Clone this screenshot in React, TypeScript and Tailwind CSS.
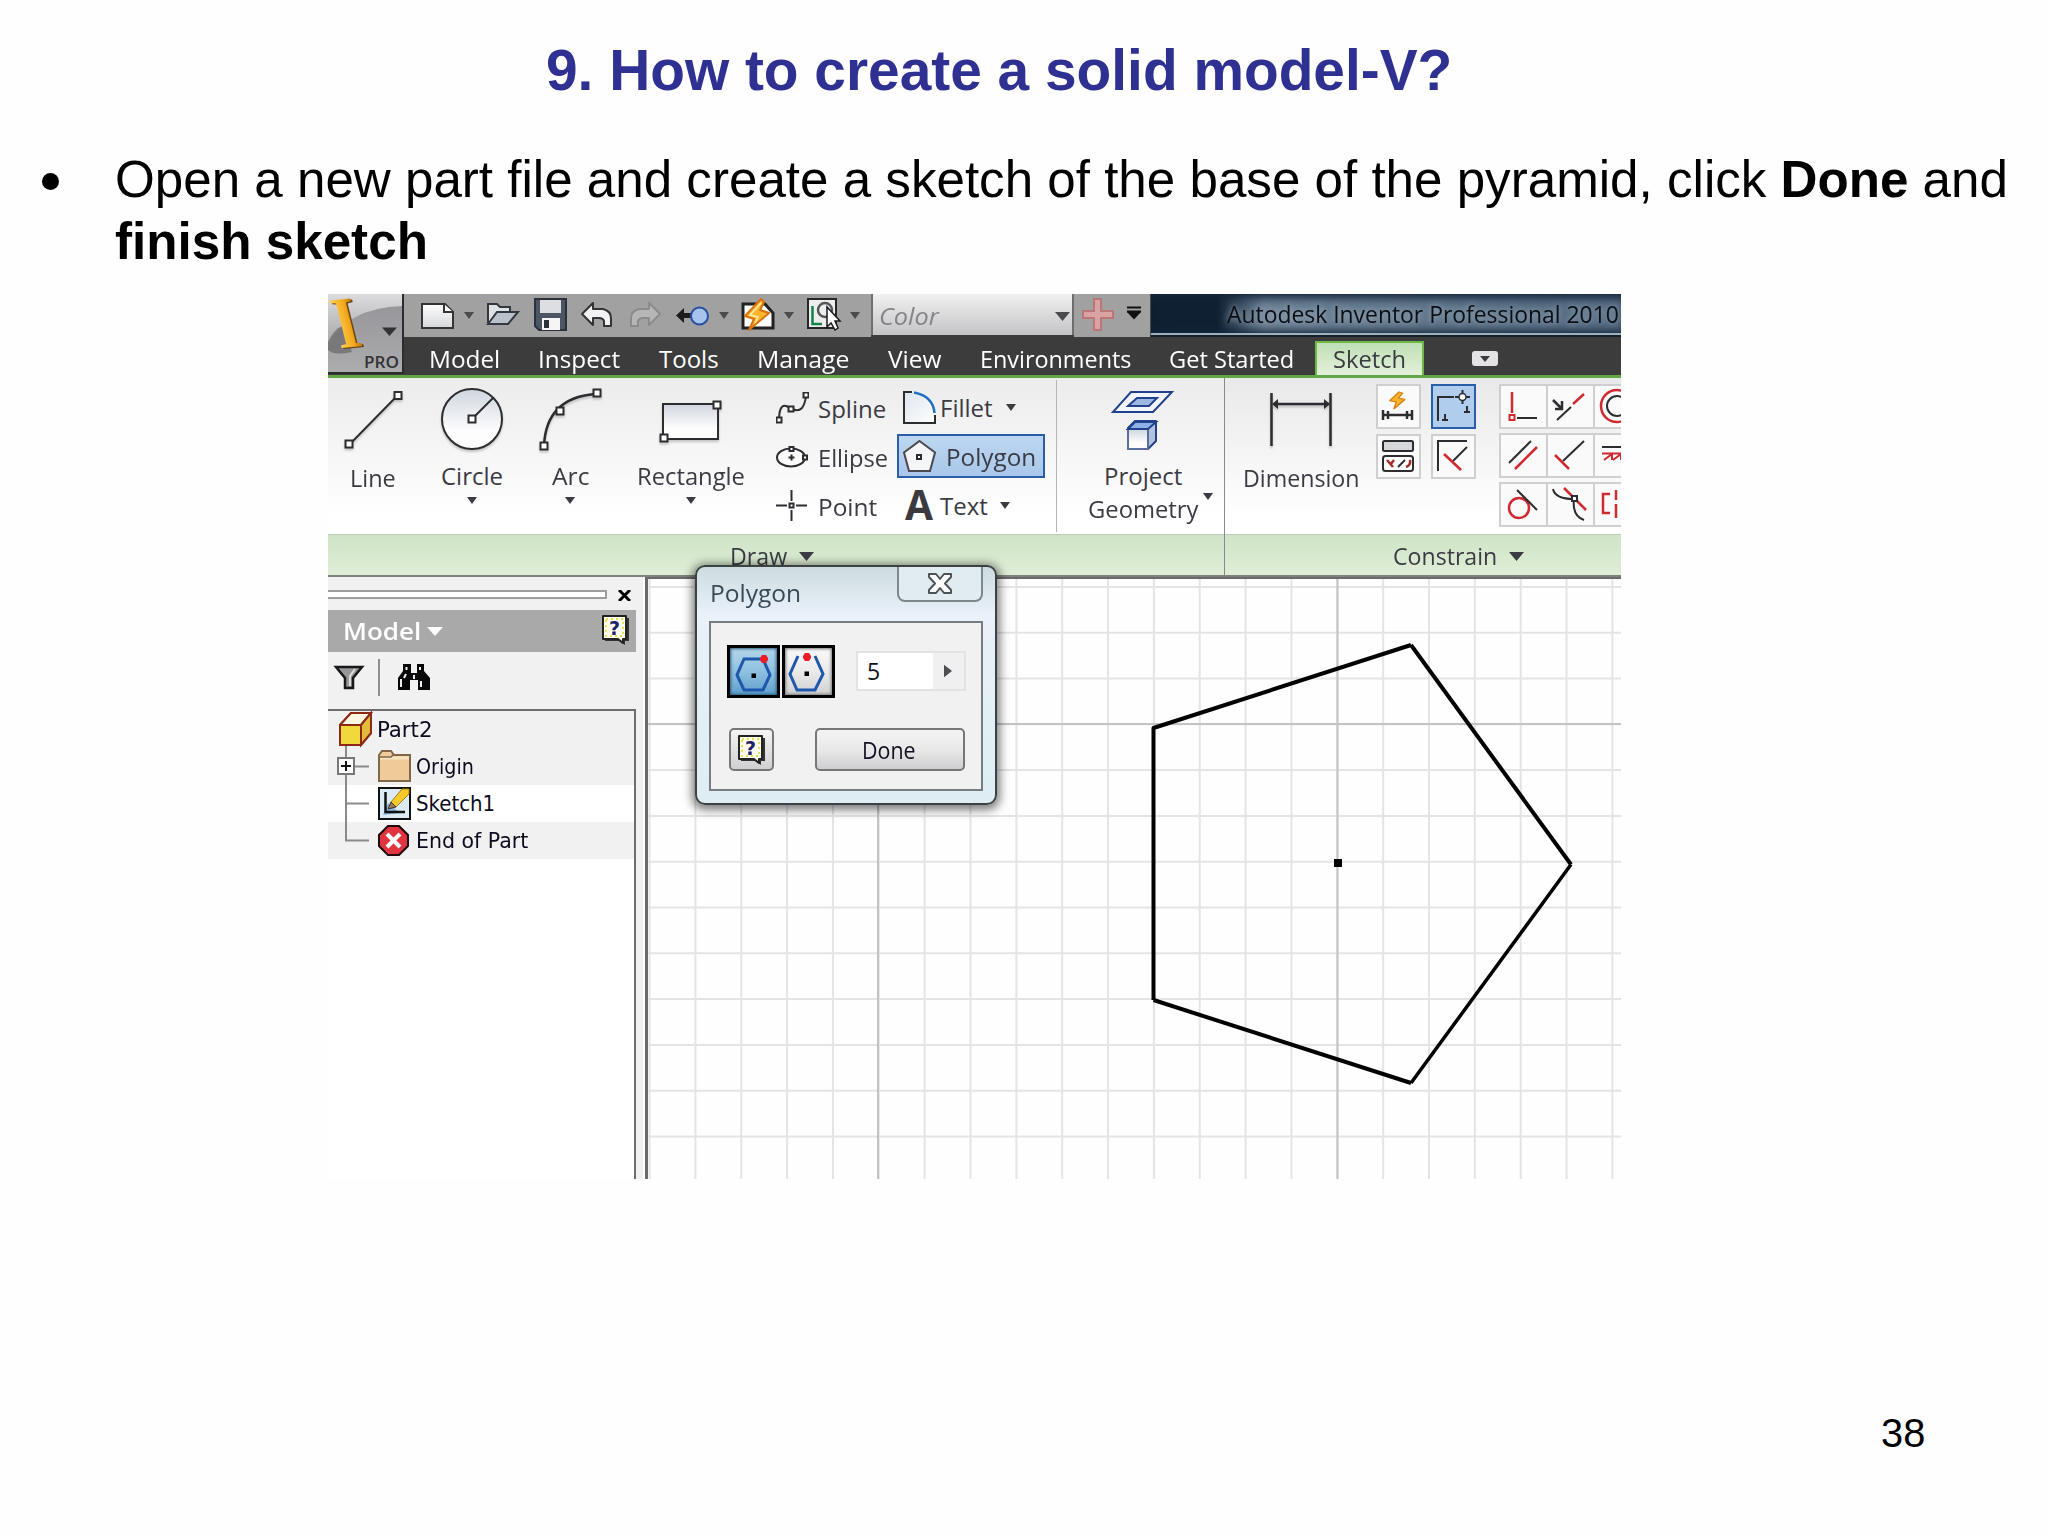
import React, { useLayoutEffect, useRef, useState } from 'react';

const UI = "font-['Open_Sans','Noto_Sans',sans-serif]";
const TAHOMA = "font-['DejaVu_Sans_Condensed','DejaVu_Sans',sans-serif]";

// One-line label squeezed or stretched to a given width
function Fit({ w, className = '', children }: { w: number; className?: string; children: React.ReactNode }) {
  const ref = useRef<HTMLSpanElement>(null);
  const [scale, setScale] = useState(1);
  useLayoutEffect(() => {
    if (ref.current) setScale(w / ref.current.offsetWidth);
  }, [w]);
  return (
    <span className={`block shrink-0 ${className}`} style={{ width: w }}>
      <span ref={ref} className="inline-block origin-left whitespace-nowrap align-top" style={{ transform: `scaleX(${scale})` }}>{children}</span>
    </span>
  );
}

function Arrow({ className = '', w = 10, h = 7 }: { className?: string; w?: number; h?: number }) {
  return (
    <svg className={`shrink-0 ${className}`} width={w} height={h} viewBox="0 0 10 7" preserveAspectRatio="none">
      <path d="M0 0H10L5 7Z" fill="currentColor" />
    </svg>
  );
}

// Small square handle used by the sketch tools
function Node({ x, y, s = 7 }: { x: number; y: number; s?: number }) {
  return <rect x={x - s / 2} y={y - s / 2} width={s} height={s} fill="#fff" stroke="#2d2d31" strokeWidth="2" />;
}

function Bolt({ t, s = 1 }: { t: string; s?: number }) {
  return <path transform={t} d="M14 0L1 14L10 16L7 27L22 12L13 10L19 2Z" fill="#ffb52e" stroke="#d9820f" strokeWidth={1.6 / s} strokeLinejoin="round" />;
}

function HelpNote() {
  return (
    <svg width="29" height="31" viewBox="0 0 29 31" className="shrink-0">
      <path d="M4 4H28V27H24V31L18 27H4Z" fill="#333" />
      <path d="M2 2H25V25H22V29L17 25H2Z" fill="#fffef0" stroke="#222" strokeWidth="2" strokeLinejoin="round" />
      <rect x="5" y="5" width="17" height="17" fill="none" stroke="#e6e24a" strokeWidth="2" strokeDasharray="2 3" />
      <text x="13.5" y="20.5" textAnchor="middle" fontFamily="DejaVu Sans" fontWeight="700" fontSize="19" fill="#22206b">?</text>
    </svg>
  );
}

function QuickAccess() {
  return (
    <div className="flex h-[43px] w-[467px] shrink-0 items-start bg-[#a2a1a2] text-[#4b4a4c]">
      <svg width="467" height="43" viewBox="404 294 467 43">
        <defs>
          <linearGradient id="paper" x1="0" y1="0" x2="0" y2="1"><stop offset="0" stopColor="#fff" /><stop offset="1" stopColor="#d5d7da" /></linearGradient>
        </defs>
        <path d="M422 304H445L453 312V328H422Z" fill="url(#paper)" stroke="#333338" strokeWidth="2" />
        <path d="M444 304V312H453" fill="#fff" stroke="#333338" strokeWidth="2" />
        <g fill="#4b4a4c">
          <path d="M464 312H474L469 319Z" />
          <path d="M719 312H729L724 319Z" />
          <path d="M784 312H794L789 319Z" />
          <path d="M850 312H860L855 319Z" />
        </g>
        <path d="M488 323V304H497L500 307H510V312" fill="#dfe2e5" stroke="#333840" strokeWidth="2" />
        <path d="M488 324L497 312H518L508 324Z" fill="#b9c1cb" stroke="#333840" strokeWidth="2" />
        <path d="M535 299H566V330H539L535 326Z" fill="#4c5563" stroke="#2c323c" strokeWidth="2" />
        <rect x="540" y="300" width="21" height="13" fill="#dcdee1" />
        <rect x="542" y="318" width="18" height="12" fill="#f5f5f5" />
        <rect x="544" y="320" width="5" height="8" fill="#2c323c" />
        <path d="M582 314L593 303V309H603Q611 311 611 318V326H604V321Q603 318 599 318H593V325Z" fill="#f2f2f2" stroke="#333338" strokeWidth="2" strokeLinejoin="round" />
        <path d="M660 314L649 303V309H639Q631 311 631 318V326H638V321Q639 318 643 318H649V325Z" fill="#b7b6b7" stroke="#8b8a8c" strokeWidth="2" strokeLinejoin="round" />
        <path d="M676 315.500L684 308V313H692V318H684V323Z" fill="#1c1c20" />
        <circle cx="699.500" cy="316" r="8.500" fill="#a6c3ee" stroke="#2b4f9e" strokeWidth="2" />
        <path d="M743 304H765L773 313V328H743Z" fill="#fff" stroke="#222" strokeWidth="3" />
        <path d="M761 299L745 316L754 319L749 330L769 313L760 310L764 302Z" fill="#ffb52e" stroke="#d9720d" strokeWidth="2" strokeLinejoin="round" />
        <path d="M761 303L750 315L758 317L755 323" fill="none" stroke="#fff3b0" strokeWidth="1.500" />
        <rect x="808" y="299" width="28" height="29" fill="#eceeec" stroke="#26262a" strokeWidth="2" />
        <path d="M812.500 306V324H822" fill="none" stroke="#15804a" strokeWidth="2.500" />
        <circle cx="825" cy="310" r="7" fill="none" stroke="#55565a" strokeWidth="2.500" />
        <path d="M827 307V327L831 323L835 330L838 328L835 321H840Z" fill="#fff" stroke="#1b1b1f" strokeWidth="1.500" />
      </svg>
    </div>
  );
}

function AppHeader() {
  return (
    <div className="flex h-[81px] bg-[#3d3c3d]">
      <div className="h-[80px] w-[76px] shrink-0 border-r-2 border-b-2 border-[#2c2c2e] bg-linear-to-b from-[#dcdcde] to-[#8b8b8e]">
        <svg width="74" height="78" viewBox="328 294 74 78" className="overflow-visible">
          <defs>
            <linearGradient id="gold" x1="0" y1="0" x2="1" y2="0"><stop offset="0" stopColor="#ffd75a" /><stop offset="0.600" stopColor="#f4a81c" /><stop offset="1" stopColor="#b26c08" /></linearGradient>
            <linearGradient id="swirl" x1="0" y1="0" x2="0" y2="1"><stop offset="0" stopColor="#97979b" /><stop offset="1" stopColor="#acacaf" /></linearGradient>
          </defs>
          <path d="M328 346Q346 308 402 306V372H328Z" fill="url(#swirl)" />
          <path d="M328 342Q336 326 344 326L352 352Q334 356 328 350Z" fill="#5d5d61" opacity="0.600" />
          <g transform="translate(346.500 323) rotate(-6) skewX(8)" fontFamily="Liberation Serif" fontWeight="700" fontSize="74">
            <text x="-11.500" y="25.500" textLength="25" lengthAdjust="spacingAndGlyphs" fill="#6b4310">I</text>
            <text x="-13" y="24.500" textLength="25" lengthAdjust="spacingAndGlyphs" fill="url(#gold)">I</text>
          </g>
          <path d="M382 327.500H397L389.500 336Z" fill="#333336" />
          <text x="364" y="367.500" textLength="35" lengthAdjust="spacingAndGlyphs" fontFamily="Open Sans" fontWeight="600" fontSize="16.500" fill="#333336">PRO</text>
        </svg>
      </div>
      <div className="flex flex-1 flex-col">
        <div className="flex h-[43px]">
          <QuickAccess />
          <div className="flex h-[41px] w-[203px] shrink-0 items-center border-l-2 border-r-2 border-[#6e6d6f] bg-linear-to-b from-[#f1f1f2] to-[#c4c3c5] pl-[6px] text-[#858487]">
            <Fit w={60} className={`pt-0.5 text-[24px] leading-[30px] italic ${UI}`}>Color</Fit>
            <Arrow w={15} h={9} className="mt-1 ml-[116px] text-[#4b4a4c]" />
          </div>
          <div className="flex h-[43px] w-[76px] shrink-0 bg-[#a2a1a2]">
            <svg width="76" height="43" viewBox="1074 294 76 43">
              <path d="M1094 299H1101V311H1113V318H1101V330H1094V318H1083V311H1094Z" fill="#d9a3a3" stroke="#bb7676" strokeWidth="2" />
              <path d="M1127 307.500H1141M1127 311.500H1141" stroke="#111" strokeWidth="2" />
              <path d="M1127 312H1141L1134 319.500Z" fill="#111" />
            </svg>
          </div>
          <div className="flex h-[43px] flex-1 items-start border-l border-b-2 border-l-[#4a4a4c] border-b-[#16202b] bg-linear-to-r from-[#0f2032] from-14% via-[#6a7f93] via-24% to-[#50667d]">
            <div className="flex h-[41px] w-full items-center border-b-2 border-[#9fb0bd] pl-[76px] shadow-[inset_0_10px_8px_-6px_#14263a,inset_0_-8px_8px_-6px_#14263a]">
              <Fit w={392} className={`text-[24px] leading-[30px] text-[#0a0f16] [text-shadow:0_0_8px_#b5c2ce] ${UI}`}>Autodesk Inventor Professional 2010</Fit>
            </div>
          </div>
        </div>
        <div className={`flex h-[38px] items-end text-[24px] leading-[30px] font-medium text-white ${UI}`}>
          <Fit w={71} className="ml-[25px] pb-px">Model</Fit>
          <Fit w={82} className="ml-[38px] pb-px">Inspect</Fit>
          <Fit w={60} className="ml-[39px] pb-px">Tools</Fit>
          <Fit w={92} className="ml-[38px] pb-px">Manage</Fit>
          <Fit w={53} className="ml-[39px] pb-px">View</Fit>
          <Fit w={151} className="ml-[39px] pb-px">Environments</Fit>
          <Fit w={125} className="ml-[38px] pb-px">Get Started</Fit>
          <div className="ml-[21px] flex h-[34px] w-[109px] items-end border-x-2 border-t-2 border-[#6fb845] bg-linear-to-b from-[#bfe0b4] to-[#e4f0dc] pb-px pl-[16px] text-[#3a3a42]">
            <Fit w={73} className="font-normal">Sketch</Fit>
          </div>
          <div className="mb-[9px] ml-[48px] flex h-[15px] w-[26px] items-center justify-center rounded-[3px] bg-[#e3e3e6] text-[#3d3c3d]">
            <Arrow w={10} h={6} />
          </div>
        </div>
      </div>
    </div>
  );
}

function Tool({ label, w, width, arrow, icon }: { label: string; w: number; width: string; arrow?: boolean; icon: React.ReactNode }) {
  return (
    <div className={`flex shrink-0 flex-col items-center pt-2.5 ${width}`}>
      <svg width="64" height="64" viewBox="0 0 64 64" fill="none" className="drop-shadow-[0_2px_1px_#0003]">{icon}</svg>
      <Fit w={w} className={arrow ? 'mt-[9px]' : 'mt-[11px]'}>{label}</Fit>
      {arrow && <Arrow className="mt-[6px]" />}
    </div>
  );
}

function DrawPanel() {
  return (
    <div className="flex w-[729px] shrink-0">
      <Tool label="Line" w={46} width="w-[90px]" icon={<><path d="M8 57L56 8" stroke="#2d2d31" strokeWidth="2" /><Node x={8} y={56} /><Node x={57} y={7.5} /></>} />
      <Tool label="Circle" w={62} width="w-[108px]" arrow icon={<><circle cx="32" cy="31" r="30" fill="url(#disc)" stroke="#2d2d31" strokeWidth="2" /><path d="M32 31L53 10" stroke="#2d2d31" strokeWidth="2" /><Node x={32} y={31} /></>} />
      <Tool label="Arc" w={37} width="w-[88px]" arrow icon={<><path d="M6 58Q8 10 57 6" stroke="#2d2d31" strokeWidth="2.500" /><Node x={6} y={58} /><Node x={22} y={23} /><Node x={59} y={5} /></>} />
      <Tool label="Rectangle" w={108} width="w-[153px]" arrow icon={<><rect x="4" y="16" width="55" height="35" fill="url(#disc)" stroke="#2d2d31" strokeWidth="2" /><Node x={5} y={50} /><Node x={58} y={17} /></>} />
      <div className="flex w-[130px] shrink-0 flex-col pt-[6px] pl-[9px]">
        <div className="flex h-[49px] items-center gap-[9px]">
          <svg width="33" height="33" viewBox="0 0 33 33" fill="none"><path d="M3 29Q3 12 10 14Q13 15 16 17Q22 20 26 16Q29 12 30 4" stroke="#2d2d31" strokeWidth="2" /><Node x={3} y={28} s={5} /><Node x={15} y={17} s={5} /><Node x={30} y={3} s={5} /></svg>
          <Fit w={68}>Spline</Fit>
        </div>
        <div className="flex h-[49px] items-center gap-[9px]">
          <svg width="33" height="33" viewBox="0 0 33 33" fill="none"><ellipse cx="15" cy="16.500" rx="14" ry="9" fill="#fafafa" stroke="#2d2d31" strokeWidth="2" /><path d="M12.500 16.500H18.500M15.500 13.500V19.500" stroke="#2d2d31" strokeWidth="2" /><Node x={15.500} y={8} s={4} /><Node x={29} y={16.500} s={4} /></svg>
          <Fit w={70}>Ellipse</Fit>
        </div>
        <div className="flex h-[49px] items-center gap-[9px]">
          <svg width="33" height="33" viewBox="0 0 33 33" fill="none"><path d="M0 15.500H11M20 15.500H31M15.500 0V11M15.500 20V31" stroke="#2d2d31" strokeWidth="2" /><Node x={15.500} y={15.500} s={4} /></svg>
          <Fit w={59}>Point</Fit>
        </div>
      </div>
      <div className="flex w-[148px] shrink-0 flex-col pt-[5px]">
        <div className="flex h-[49px] items-center pl-[6px]">
          <svg width="33" height="33" viewBox="0 0 33 33" fill="none"><path d="M1 1H8Q31 4 32 24V32H1Z" fill="url(#disc2)" /><path d="M9 1H1V32H32V24" stroke="#2d2d31" strokeWidth="2" /><path d="M11 1.500Q30 5 31.500 22" stroke="#2270c4" strokeWidth="2.500" /></svg>
          <Fit w={53} className="ml-[4px] pt-px">Fillet</Fit>
          <Arrow className="ml-[13px]" />
        </div>
        <div className="mt-[2px] mb-[3px] flex h-[44px] items-center border-2 border-[#2a5ea8] bg-linear-to-b from-[#bdd7f1] to-[#a9c7ea] pl-[4px]">
          <svg width="33" height="33" viewBox="0 0 33 33" fill="none"><path d="M16.500 1L32 12.500L27 31H6L1 12.500Z" fill="#f4f5f7" stroke="#4a4a50" strokeWidth="2" /><Node x={16} y={17} s={4} /></svg>
          <Fit w={90} className="ml-[10px] pt-px">Polygon</Fit>
        </div>
        <div className="flex h-[49px] items-center pl-[6px]">
          <svg width="33" height="33" viewBox="0 0 33 33" className="overflow-visible"><text x="2" y="31" fontFamily="Open Sans" fontWeight="700" fontSize="41" textLength="28" lengthAdjust="spacingAndGlyphs" fill="#3b3b3f">A</text></svg>
          <Fit w={48} className="ml-[4px] pt-px">Text</Fit>
          <Arrow className="ml-[12px]" />
        </div>
      </div>
      <div className="mt-[2px] ml-[11px] h-[152px] w-px bg-[#b5b5b8]" />
    </div>
  );
}

function ProjectPanel() {
  return (
    <div className="flex w-[167px] flex-col pt-2.5">
      <svg width="64" height="64" viewBox="0 0 64 64" fill="none" className="ml-[54px]">
        <path d="M20 4H61L42 24H2Z" fill="#f2f6fc" stroke="#22418c" strokeWidth="2" />
        <path d="M26 10H46L38 18H17Z" fill="#9db9e2" stroke="#22418c" strokeWidth="2" />
        <path d="M17 40L24 33H45V53L37 61H17Z" fill="#b3c2dc" stroke="#22418c" strokeWidth="2" strokeLinejoin="round" />
        <rect x="17" y="41" width="20" height="20" fill="url(#disc)" stroke="#5a6f9f" strokeWidth="2" />
        <path d="M17 41L24 34H45L37 41Z" fill="#8fb2e6" stroke="#22418c" strokeWidth="2" />
      </svg>
      <div className="mt-[7px] ml-[30px] flex items-center">
        <div className="flex w-[112px] flex-col items-center leading-[33px]">
          <Fit w={78}>Project</Fit>
          <Fit w={110}>Geometry</Fit>
        </div>
        <Arrow className="mt-2 ml-[4px]" />
      </div>
    </div>
  );
}

const red = '#cf2a2e';
const ink = '#2d2d31';

const constraints: React.ReactNode[] = [
  <><path d="M13 8V29" stroke={red} strokeWidth="2.500" /><rect x="10.500" y="31" width="5" height="5" stroke={red} strokeWidth="2" /><path d="M18 34H38" stroke={ink} strokeWidth="2" /></>,
  <><path d="M7 16L15 24M16 17V25H9" stroke={ink} strokeWidth="2.500" /><path d="M11 36L25 23" stroke={ink} strokeWidth="2" /><path d="M27 20L38 10" stroke={red} strokeWidth="2.500" /></>,
  <><circle cx="24" cy="22" r="16" stroke={red} strokeWidth="2.500" /><circle cx="24" cy="22" r="10" stroke={ink} strokeWidth="2" /></>,
  <><path d="M10 30L32 8" stroke={ink} strokeWidth="2" /><path d="M16 36L38 14" stroke={red} strokeWidth="2.500" /></>,
  <><path d="M17 28L38 8" stroke={ink} strokeWidth="2" /><path d="M9 22L23 36" stroke={red} strokeWidth="2.500" /></>,
  <><path d="M9 14H38" stroke={ink} strokeWidth="2" /><path d="M9 20.500H38M11 27L19 21V27M20 27L28 21V27" stroke={red} strokeWidth="2" /></>,
  <><circle cx="20" cy="26" r="10" stroke={red} strokeWidth="2.500" /><path d="M18 8L38 28" stroke={ink} strokeWidth="2" /></>,
  <><path d="M7 7Q9 17 28 17Q26 34 38 38" stroke={ink} strokeWidth="2" /><path d="M18 6L40 28" stroke={red} strokeWidth="2.500" /><rect x="26" y="14" width="5" height="5" fill="#fff" stroke={ink} strokeWidth="2" /></>,
  <><path d="M17 12H10V31H17M23 8V18M23 22V36" stroke={red} strokeWidth="2.500" /></>,
];

function SmallBtn({ on, children }: { on?: boolean; children: React.ReactNode }) {
  return (
    <div className={`h-[45px] w-[45px] border-2 ${on ? 'border-[#2a5ea8] bg-[#b0cdee]' : 'border-[#cfcfd2] bg-[#fafafb]'}`}>
      <svg width="41" height="41" viewBox="0 0 41 41" fill="none">{children}</svg>
    </div>
  );
}

function ConstrainPanel() {
  return (
    <div className="flex">
      <Tool label="Dimension" w={117} width="w-[152px]" icon={<><path d="M2.500 5V58M61.500 5V58M5 16H60" stroke="#2d2d31" strokeWidth="2.500" /><path d="M3 16L9 11V21ZM61 16L55 11V21Z" fill="#2d2d31" /></>} />
      <div className="mt-[6px] -ml-px grid shrink-0 grid-cols-[45px_45px] content-start gap-x-[10px] gap-y-[5px]">
        <SmallBtn><Bolt t="translate(11 6) scale(.72 .62)" s={0.8} /><path d="M5 24V34M34 24V34M5 29H34M10 25V33M29 25V33" stroke={ink} strokeWidth="2.500" /></SmallBtn>
        <SmallBtn on><path d="M5 35V11H21" stroke={ink} strokeWidth="2" /><path d="M29.500 4V8M29.500 14V18M22 11H26M33 11H37M9 34H15M12 28V34M31 26H37M34 20V26" stroke={ink} strokeWidth="2" /><circle cx="29.500" cy="11" r="3.500" fill="#fff" stroke={ink} strokeWidth="1.500" /></SmallBtn>
        <SmallBtn><rect x="5" y="5" width="30" height="10" rx="1.500" fill="#d5d7dd" stroke={ink} strokeWidth="2" /><rect x="5" y="20" width="30" height="15" rx="2.500" fill="#fff" stroke={ink} strokeWidth="2" /><path d="M9 24L15 31M12 29L16 24M28 31Q33 29 32 24" stroke="#a92b25" strokeWidth="2.500" /><path d="M20 31L27 24" stroke={ink} strokeWidth="2" /></SmallBtn>
        <SmallBtn><path d="M5 35V5H34" stroke={ink} strokeWidth="2" /><path d="M20 25L34 11" stroke={ink} strokeWidth="2" /><path d="M11 18L28 34" stroke={red} strokeWidth="2.500" /></SmallBtn>
      </div>
      <div className="mt-[6px] ml-[23px] grid shrink-0 grid-cols-[47px_47px_47px] content-start gap-y-[4px]">
        {constraints.map((c, i) => (
          <div key={i} className="h-[45px] w-[48px] border-2 border-r border-[#cfcfd2] bg-[#fafafb]">
            <svg width="45" height="41" viewBox="2 2 45 41" fill="none">{c}</svg>
          </div>
        ))}
      </div>
    </div>
  );
}

function Ribbon() {
  return (
    <div className={`flex h-[202px] border-t-[3px] border-b-[2px] border-t-[#5fa843] border-b-[#7d837b] text-[24px] leading-[30px] text-[#3b3b44] ${UI}`}>
      <div className="flex w-[896px] shrink-0 flex-col">
        <div className="flex h-[156px] bg-linear-to-b from-[#ececed] to-white to-90%">
          <DrawPanel />
          <ProjectPanel />
        </div>
        <div className="flex h-[41px] items-start border-t border-[#bccbb5] bg-linear-to-b from-[#cfe4c6] to-[#dfeed7] pt-[6px]">
          <Fit w={57} className="ml-[402px]">Draw</Fit>
          <Arrow w={15} h={9} className="mt-[11px] ml-[12px]" />
        </div>
      </div>
      <div className="flex w-[397px] flex-col overflow-hidden border-l border-[#8a8a8d]">
        <div className="h-[156px] bg-linear-to-b from-[#e9e9ea] to-white to-90%"><ConstrainPanel /></div>
        <div className="flex h-[41px] items-start border-t border-[#bccbb5] bg-linear-to-b from-[#cfe4c6] to-[#dfeed7] pt-[6px]">
          <Fit w={104} className="ml-[168px]">Constrain</Fit>
          <Arrow w={15} h={9} className="mt-[11px] ml-[12px]" />
        </div>
      </div>
    </div>
  );
}

function TreeRow({ bg, w, label, pad, icon }: { bg: string; w: number; label: string; pad: string; icon: React.ReactNode }) {
  return (
    <div className={`flex h-[37px] items-center ${bg} ${pad}`}>
      {icon}
      <Fit w={w} className="ml-[4px]">{label}</Fit>
    </div>
  );
}

function Branch({ plus, last }: { plus?: boolean; last?: boolean }) {
  return (
    <svg width="50" height="37" viewBox="0 0 50 37" fill="none" className="shrink-0">
      <path d={last ? 'M18 0V18.500H41' : 'M18 0V37M18 18.500H41'} stroke="#8a8a8c" strokeWidth="2" />
      {plus && <><rect x="10" y="10" width="16" height="16" fill="#fff" stroke="#77777a" strokeWidth="2" /><path d="M13 18H23M18 13V23" stroke="#111" strokeWidth="2" /></>}
    </svg>
  );
}

function ModelBrowser() {
  return (
    <div className="flex w-[315px] shrink-0 flex-col bg-[#f1f1f2]">
      <div className="flex h-[33px]">
        <div className="mt-[13px] h-[9px] w-[279px] border-y-2 border-r-2 border-[#9d9da0] bg-white" />
        <svg className="mt-[13px] ml-[11px]" width="13" height="11" viewBox="0 0 13 11"><path d="M1 0L12 11M12 0L1 11" stroke="#000" strokeWidth="3" /></svg>
      </div>
      <div className="flex h-[42px] w-[308px] items-center bg-[#a9a9aa] pl-[15px] text-white">
        <Fit w={78} className={`text-[24px] leading-[30px] font-semibold ${UI}`}>Model</Fit>
        <Arrow w={16} h={9} className="ml-[6px]" />
        <div className="-mt-1 ml-[158px]"><HelpNote /></div>
      </div>
      <div className="flex h-[57px] items-start">
        <svg width="110" height="56" viewBox="328 652 110 56">
          <path d="M336 667H362L353 678V688H345V678Z" fill="#97979a" stroke="#18181a" strokeWidth="2.500" />
          <path d="M355 669L350 676V686" stroke="#dcdcdc" strokeWidth="2" fill="none" />
          <path d="M379 659V696" stroke="#8f8f92" strokeWidth="2" />
          <path d="M403 664H411V673H417V664H424V671L430 678V690H418V680H410V690H398V678L403 671Z" fill="#08080a" />
          <path d="M401 679V687M406.500 667V670M420 667V670M421 681V687M414 675V679M406 674L404 678" stroke="#eee" strokeWidth="2" />
        </svg>
      </div>
      <div className={`w-[308px] flex-1 border-t-2 border-r-2 border-[#6d6d70] bg-white text-[22px] leading-[30px] text-[#0c0c20] ${TAHOMA}`}>
        <TreeRow bg="bg-[#f1f1f2]" pad="pl-[11px]" w={56} label="Part2" icon={
          <svg width="34" height="37" viewBox="0 0 34 37" fill="none" className="shrink-0">
            <path d="M7 33V37" stroke="#8a8a8c" strokeWidth="2" />
            <path d="M1 14L12 2H32V22L22 34H1Z" fill="#ffe9a0" stroke="#8c2a17" strokeWidth="2" strokeLinejoin="round" />
            <path d="M1 14L12 2H32L22 14Z" fill="#fff8e0" stroke="#8c2a17" strokeWidth="2" />
            <rect x="1" y="14" width="21" height="20" fill="#f2d93b" stroke="#8c2a17" strokeWidth="2" />
            <path d="M22 14L32 2V22L22 34Z" fill="#e2bb3b" stroke="#8c2a17" strokeWidth="2" />
          </svg>
        } />
        <TreeRow bg="bg-[#f1f1f2]" pad="" w={58} label="Origin" icon={<>
          <Branch plus />
          <svg width="34" height="33" viewBox="0 0 34 33" className="shrink-0"><path d="M1 5L4 1H13L16 5H32V31H1Z" fill="#eecb98" stroke="#82664a" strokeWidth="2" /><path d="M2 8H31" stroke="#f8e3c0" strokeWidth="3" /><path d="M2 7H13L16 4" fill="none" stroke="#82664a" strokeWidth="1.500" /></svg>
        </>} />
        <TreeRow bg="bg-white" pad="" w={79} label="Sketch1" icon={<>
          <Branch />
          <svg width="34" height="33" viewBox="0 0 34 33" fill="none" className="shrink-0"><rect x="1" y="1" width="31" height="31" fill="#dceaf6" stroke="#111" strokeWidth="2" /><path d="M5 28L10 16L22 26Z" fill="#88b5dc" /><path d="M7.500 5V25H27" stroke="#111" strokeWidth="2.500" /><path d="M24 2H31V7L18 20L13 15Z" fill="#f5c928" stroke="#a87b14" strokeWidth="1" /><path d="M13 15L18 20L10 22Z" fill="#a5794c" stroke="#333" /></svg>
        </>} />
        <TreeRow bg="bg-[#f1f1f2]" pad="" w={112} label="End of Part" icon={<>
          <Branch last />
          <svg width="34" height="33" viewBox="0 0 34 33" fill="none" className="shrink-0"><path d="M10 2H21L30 11V22L21 31H10L1 22V11Z" fill="#e0343f" stroke="#20090b" strokeWidth="2" /><path d="M9 10L22 23M22 10L9 23" stroke="#fff" strokeWidth="4" /></svg>
        </>} />
      </div>
    </div>
  );
}

const xs = Array.from({ length: 22 }, (_, i) => 1337.3 + (i - 15) * 45.85);
const ys = Array.from({ length: 13 }, (_, i) => 724.3 + (i - 3) * 45.8);

function SketchCanvas() {
  return (
    <svg className="shrink-0 border-t-2 border-l-[3px] border-[#6a6a6d]" width="976" height="602" viewBox="648 579 973 600" fill="none">
      <rect x="648" y="579" width="973" height="600" fill="#fefefe" />
      {xs.map((x, i) => <path key={i} d={`M${x} 579V1179`} stroke="#e6e3e6" strokeWidth="2" />)}
      {ys.map((y, i) => <path key={i} d={`M648 ${y}H1621`} stroke="#e6e3e6" strokeWidth="2" />)}
      <path d="M878 579V1179M1337.500 579V1179M648 724H1621" stroke="#c3c2c4" strokeWidth="2" />
      <path d="M1153.500 1000V728L1411 645" stroke="#000" strokeWidth="4" strokeLinejoin="round" />
      <path d="M1411 645L1571 864.500" stroke="#000" strokeWidth="4" />
      <path d="M1571 864.500L1411 1083" stroke="#000" strokeWidth="3.500" />
      <path d="M1411 1083L1153.500 1000" stroke="#000" strokeWidth="4" />
      <rect x="1334" y="859" width="8" height="8" fill="#000" />
    </svg>
  );
}

function PolygonDialog() {
  return (
    <div className={`absolute top-[271px] left-[367px] flex h-[240px] w-[302px] flex-col rounded-[10px] border-2 border-[#3c4144] bg-linear-to-b from-[#cddcde] via-[#e9f1fa] via-20% to-[#deedf4] px-[12px] shadow-[0_2px_10px_3px_#00000080] ${UI}`}>
      <div className="flex h-[54px] shrink-0 justify-between text-[24px] leading-[30px] text-[#3a4a56]">
        <Fit w={91} className="mt-[11px] ml-px">Polygon</Fit>
        <div className="flex h-[35px] w-[86px] justify-center rounded-b-[8px] border-2 border-t-0 border-[#7d878c] bg-[#e1ecf0]">
          <svg className="mt-[5px]" width="26" height="23" viewBox="0 0 26 23"><path d="M2 2H9L13 7L17 2H24V5L18 11.500L24 18V21H17L13 16L9 21H2V18L8 11.500L2 5Z" fill="#fff" stroke="#4c5357" strokeWidth="2" strokeLinejoin="round" /></svg>
        </div>
      </div>
      <div className="h-[170px] border-2 border-[#777c80] bg-[#f1f1f2] px-[16px] pt-[22px]">
        <div className="flex items-start">
          <div className="h-[53px] w-[53px] border-[3px] border-black bg-linear-to-b from-[#b4d6ea] via-[#8fc0df] to-[#5ea0cc] shadow-[inset_0_0_3px_1px_#2c5d80]">
            <svg width="47" height="47" viewBox="0 0 47 47" fill="none"><path d="M14 11H33L40 27L33 42H14L7 27Z" stroke="#1f57ad" strokeWidth="3" /><rect x="21.500" y="25.500" width="4.500" height="4.500" fill="#000" /><path d="M32 7H36L38 10V12L36 15H32L30 12V10Z" fill="#ee1c25" /></svg>
          </div>
          <div className="ml-[2px] h-[53px] w-[53px] border-[3px] border-black bg-linear-to-b from-[#fafafa] via-[#eaeaeb] via-50% to-[#d2d2d4] shadow-[inset_0_0_3px_1px_#777]">
            <svg width="47" height="47" viewBox="0 0 47 47" fill="none"><path d="M13 8L5 26L12 42H30L38 26L30 8" stroke="#1f57ad" strokeWidth="3" /><rect x="19.500" y="23.500" width="4.500" height="4.500" fill="#000" /><path d="M20 5H24L26 8V10L24 13H20L18 10V8Z" fill="#ee1c25" /></svg>
          </div>
          <div className="mt-[6px] ml-[21px] flex h-[40px] w-[110px] items-center border-2 border-[#e2e2e4] bg-white">
            <span className="w-[76px] pl-[9px] text-[23px] leading-[30px] text-[#101020]">5</span>
            <span className="flex h-full w-[32px] items-center justify-center bg-[#f0f0f1]">
              <svg width="8" height="14" viewBox="0 0 9 14"><path d="M0 0L9 7L0 14Z" fill="#4e4e52" /></svg>
            </span>
          </div>
        </div>
        <div className="mt-[30px] flex items-center">
          <div className="ml-[2px] flex h-[43px] w-[45px] items-center justify-center rounded-[5px] border-2 border-[#77777a] bg-linear-to-b from-[#f4f4f4] to-[#d0d0d2]"><HelpNote /></div>
          <div className="ml-[41px] flex h-[43px] w-[150px] items-center rounded-[5px] border-2 border-[#77777a] bg-linear-to-b from-[#f4f4f4] via-[#e9e9ea] to-[#cfcfd1] pl-[45px] text-[23px] leading-[30px] text-[#101020]">
            <Fit w={54}>Done</Fit>
          </div>
        </div>
      </div>
    </div>
  );
}

export default function App() {
  return (
    <div className="flex h-[1536px] w-[2048px] flex-col overflow-hidden bg-[#fefefe] font-['Liberation_Sans',Arial,sans-serif] text-black">
      <svg width="0" height="0" className="absolute">
        <defs>
          <linearGradient id="disc" x1="0" y1="0" x2="0" y2="1"><stop offset="0" stopColor="#cfd6df" /><stop offset="0.700" stopColor="#fdfdfe" /></linearGradient>
          <linearGradient id="disc2" x1="1" y1="1" x2="0" y2="0"><stop offset="0" stopColor="#fff" /><stop offset="1" stopColor="#dde5ee" /></linearGradient>
        </defs>
      </svg>
      <h1 className="mt-[38px] ml-[546px] h-[64px] shrink-0 text-[56.9px] leading-[64px] font-bold whitespace-nowrap text-[#2e3192]">
        <Fit w={906}>9. How to create a solid model-V?</Fit>
      </h1>
      <div className="mt-[47px] flex h-[145px] shrink-0 text-[51.2px] leading-[61.500px] whitespace-nowrap">
        <span className="mt-[24px] ml-[42px] h-[17px] w-[17px] rounded-full bg-black" />
        <p className="ml-[56px]">
          <Fit w={1893}>Open a new part file and create a sketch of the base of the pyramid, click <b>Done</b> and</Fit>
          <b>finish sketch</b>
        </p>
      </div>
      <div className="relative ml-[328px] flex h-[885px] w-[1293px] shrink-0 flex-col">
        <AppHeader />
        <Ribbon />
        <div className="flex min-h-0 flex-1 overflow-hidden">
          <ModelBrowser />
          <div className="w-[2px] shrink-0 bg-white" />
          <SketchCanvas />
        </div>
        <PolygonDialog />
      </div>
      <div className="mt-[231px] ml-[1881px] text-[39.8px] leading-[46px]">38</div>
    </div>
  );
}
